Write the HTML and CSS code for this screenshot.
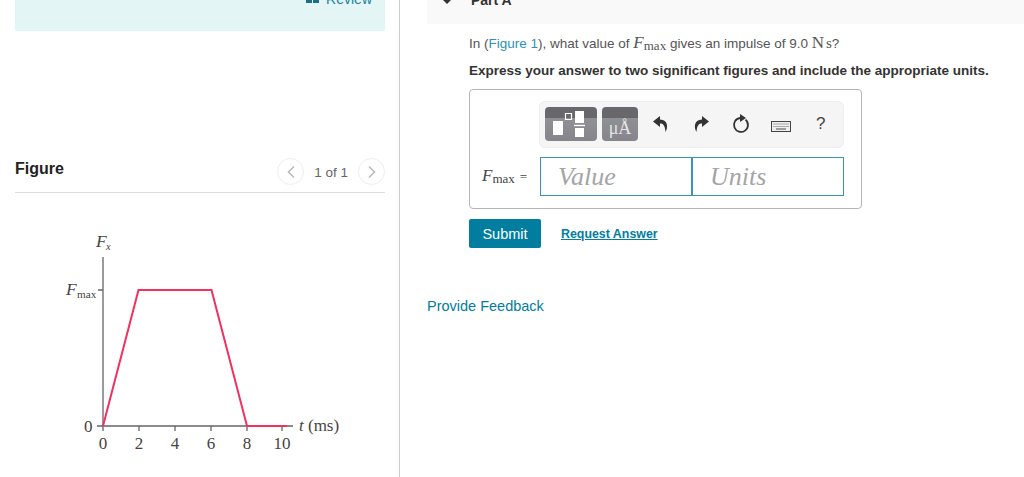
FILE: index.html
```html
<!DOCTYPE html>
<html lang="en">
<head>
    <meta charset="UTF-8">
    <meta name="viewport" content="width=device-width, initial-scale=1.0">
    <title>Part A</title>
    <link rel="stylesheet" href="styles.css">
</head>
<body>
<div class="page">
    <!-- Left column: review banner and figure -->
    <div class="left">
        <div class="banner">
            <span class="review">
                <svg class="book" width="15" height="12" viewBox="0 0 15 12"><path d="M1 0h6v10H1zM8 0h6v10H8z" fill="#1b6f86"/></svg>
                Review
            </span>
        </div>
        <div class="figure-head">
            <h2>Figure</h2>
            <div class="pager">
                <span class="circle"><svg width="10" height="14" viewBox="0 0 10 14"><path d="M8 1.500 2.500 7 8 12.500" fill="none" stroke="#bbb" stroke-width="1.600"/></svg></span>
                <span class="count">1 of 1</span>
                <span class="circle"><svg width="10" height="14" viewBox="0 0 10 14"><path d="M2 1.500 7.500 7 2 12.500" fill="none" stroke="#bbb" stroke-width="1.600"/></svg></span>
            </div>
        </div>
        <svg class="graph" width="370" height="284" viewBox="15 193 370 284">
            <g stroke="#666" stroke-width="1.300" fill="none">
                <path d="M103 257V431M98 290H103M97 426H293"/>
                <path d="M139 426V431M175 426V431M211 426V431M247 426V431M282 426V431"/>
            </g>
            <path d="M103 426 138.500 290H211.500L247 426H287" fill="none" stroke="#f4305f" stroke-width="2"/>
            <g class="graph-text">
                <text x="96" y="247" class="ital" font-size="17.500">F</text>
                <text x="106" y="250" class="ital" font-size="10.500">x</text>
                <text x="66" y="295" class="ital" font-size="17.500">F</text>
                <text x="77" y="298" font-size="11.200">max</text>
                <text x="84" y="432" font-size="17">0</text>
                <text x="103" y="449" font-size="17" text-anchor="middle">0</text>
                <text x="139" y="449" font-size="17" text-anchor="middle">2</text>
                <text x="175" y="449" font-size="17" text-anchor="middle">4</text>
                <text x="211" y="449" font-size="17" text-anchor="middle">6</text>
                <text x="247" y="449" font-size="17" text-anchor="middle">8</text>
                <text x="282" y="449" font-size="17" text-anchor="middle">10</text>
                <text x="299" y="431" font-size="17"><tspan class="ital">t</tspan> (ms)</text>
            </g>
        </svg>
    </div>

    <!-- Right column: the question -->
    <div class="right">
        <div class="part-head">
            <svg class="caret" width="8" height="4" viewBox="0 0 8 4"><path d="M0 0h8L4 4z" fill="#333"/></svg>
            <span>Part A</span>
        </div>
        <div class="question">
            <p class="prompt">In (<a href="#">Figure 1</a>), what value of <span class="math big"><i>F</i><span class="sub">max</span></span> gives an impulse of 9.0 <span class="math big">N</span><span class="math unit">s</span>?</p>
            <p class="instruction">Express your answer to two significant figures and include the appropriate units.</p>

            <div class="answer-box">
                <div class="toolbar">
                    <span class="tool wide">
                        <svg width="52" height="34" viewBox="0 0 52 34">
                            <path d="M8 14h10v14H8zM30 4h9v12h-9zM30 21h9v9h-9z" fill="#fff"/>
                            <path d="M29 18.500h11" stroke="#fff" stroke-width="1.400"/>
                            <path d="M20.500 6.500h6v6h-6z" fill="none" stroke="#fff" stroke-width="1.200"/>
                        </svg>
                    </span>
                    <span class="tool narrow">μÅ</span>
                    <svg class="action undo" width="16" height="16" viewBox="0 0 16 16"><path d="M7 0 0 5.500 7 11V7.500c3 0 5 1.500 5.500 8.500 2.500-4 3-12-5.500-12.500z" fill="#333"/></svg>
                    <svg class="action redo" width="16" height="16" viewBox="0 0 16 16"><path d="M9 0l7 5.500L9 11V7.500c-3 0-5 1.500-5.500 8.500C1 12 .5 4 9 3.500z" fill="#333"/></svg>
                    <svg class="action refresh" width="18" height="20" viewBox="0 0 18 20"><path d="M8 4A7 7 0 1 0 13.500 5.600" fill="none" stroke="#333" stroke-width="1.800"/><path d="M8 0l6 4-6 4z" fill="#333"/></svg>
                    <svg class="action keys" width="20" height="11" viewBox="0 0 20 11">
                        <rect x=".5" y=".5" width="19" height="10" fill="#eee" stroke="#444"/>
                        <path d="M2.500 3h15M2.500 5.500h15" stroke="#666" stroke-width="1.200" stroke-dasharray="1 1"/>
                        <path d="M5 8h10" stroke="#666" stroke-width="1.200"/>
                    </svg>
                    <span class="help">?</span>
                </div>
                <div class="answer-row">
                    <span class="math label"><i>F</i><span class="sub">max</span><span class="equals">=</span></span>
                    <input class="field" type="text" placeholder="Value">
                    <input class="field" type="text" placeholder="Units">
                </div>
            </div>

            <div class="actions">
                <button type="button">Submit</button>
                <a class="request" href="#">Request Answer</a>
            </div>
        </div>
        <a class="feedback" href="#">Provide Feedback</a>
    </div>
</div>
</body>
</html>
```

FILE: styles.css
```css
body {
    font-family: "Liberation Sans", Arial, sans-serif;
    margin: 0;
    background-color: #fff;
    color: #333;
}
a {
    color: #007d9f;
    text-decoration: none;
}
.page {
    display: flex;
    height: 477px;
    overflow: hidden;
}
.left {
    width: 400px;
    box-sizing: border-box;
    padding: 0 14px 0 15px;
    border-right: 1px solid #ccd;
    flex-shrink: 0;
}
.banner {
    height: 31px;
    background-color: #e4f5f6;
    position: relative;
    overflow: hidden;
}
.review {
    position: absolute;
    right: 13px;
    top: -9px;
    font-size: 14px;
    color: #1b7f9b;
    display: flex;
    align-items: center;
    gap: 6px;
}
.figure-head {
    display: flex;
    justify-content: space-between;
    align-items: center;
    height: 47px;
    margin-top: 114px;
    border-bottom: 1px solid #ddd;
}
.figure-head h2 {
    margin: 0;
    font-size: 16px;
    color: #222;
}
.pager {
    display: flex;
    align-items: center;
    font-size: 13.500px;
    color: #666;
    position: relative;
    top: 3px;
}
.count {
    margin: 2px 10px 0;
}
.circle {
    width: 25px;
    height: 25px;
    border: 1px solid #eee;
    border-radius: 50%;
    display: flex;
    align-items: center;
    justify-content: center;
}
.graph {
    display: block;
}
.graph-text text {
    font-family: "Liberation Serif", serif;
    fill: #444;
}
.ital {
    font-style: italic;
}
.right {
    flex: 1;
    padding-left: 27px;
}
.part-head {
    height: 24px;
    background-color: #f9f9f9;
    position: relative;
    overflow: hidden;
}
.part-head span {
    position: absolute;
    left: 44px;
    top: -8px;
    font-size: 14px;
    font-weight: bold;
}
.caret {
    position: absolute;
    left: 16px;
    top: 0;
}
.question {
    padding-left: 42px;
    width: 525px;
}
.prompt {
    margin: 11px 0 0;
    font-size: 13.500px;
    line-height: 16px;
    color: #555;
    white-space: nowrap;
}
.prompt a {
    color: #2b93b3;
}
.instruction {
    margin: 11px 0 0;
    font-size: 13.500px;
    line-height: 16px;
    font-weight: bold;
    color: #333;
    white-space: nowrap;
}
.math {
    font-family: "Liberation Serif", serif;
}
.math.big {
    font-size: 17px;
}
.unit {
    margin-left: 2px;
    font-size: 15px;
}
.sub {
    font-size: 13px;
    position: relative;
    top: 2px;
}
.answer-box {
    width: 393px;
    height: 120px;
    box-sizing: border-box;
    margin-top: 10px;
    padding: 11px 17px 0 11px;
    border: 1px solid #b5b5b5;
    border-radius: 4px;
}
.toolbar {
    width: 305px;
    height: 47px;
    box-sizing: border-box;
    margin-left: 58px;
    padding: 5px 0 0 5px;
    display: flex;
    align-items: flex-start;
    background-color: #f5f5f5;
    border: 1px solid #eee;
    border-radius: 6px;
}
.tool {
    height: 34px;
    border-radius: 4px;
    background: linear-gradient(to bottom, #68686c 0, #68686c 32%, #8f8f96 33%, #85858b 100%);
}
.wide {
    width: 52px;
}
.wide svg {
    display: block;
}
.narrow {
    width: 36px;
    margin-left: 5px;
    font-family: "Liberation Serif", serif;
    font-size: 18px;
    line-height: 43px;
    text-align: center;
    color: #e4e4e4;
}
.action {
    flex-shrink: 0;
}
.undo {
    margin: 9px 0 0 15px;
}
.redo {
    margin: 9px 0 0 24px;
}
.refresh {
    margin: 7px 0 0 23px;
}
.keys {
    margin: 14px 0 0 21px;
}
.help {
    margin: 7px 0 0 25px;
    font-size: 17px;
    color: #444;
}
.answer-row {
    display: flex;
    align-items: center;
    margin-top: 9px;
}
.label {
    width: 58px;
    padding-left: 1px;
    margin-top: -2px;
    font-size: 13px;
    color: #444;
    flex-shrink: 0;
}
.label i {
    font-size: 17px;
}
.equals {
    margin-left: 5px;
}
.field {
    width: 151.500px;
    height: 39px;
    box-sizing: border-box;
    padding: 0 17px;
    margin-right: .5px;
    border: 1px solid #3a93b0;
    border-radius: 0;
    background: #fff;
    font-family: "Liberation Serif", serif;
    font-style: italic;
    font-size: 26px;
    flex-shrink: 0;
}
.field::placeholder {
    color: #a5a5a5;
    opacity: 1;
}
.actions {
    display: flex;
    align-items: center;
    margin-top: 10px;
}
button {
    width: 72px;
    height: 29px;
    padding: 0;
    background-color: #007d9f;
    color: #fff;
    border: none;
    border-radius: 2px;
    font-family: inherit;
    font-size: 14.500px;
    font-weight: normal;
}
.request {
    margin-left: 20px;
    font-size: 12.400px;
    font-weight: bold;
    text-decoration: underline;
}
.feedback {
    display: block;
    margin-top: 49px;
    font-size: 14.500px;
    line-height: 18px;
}
```
